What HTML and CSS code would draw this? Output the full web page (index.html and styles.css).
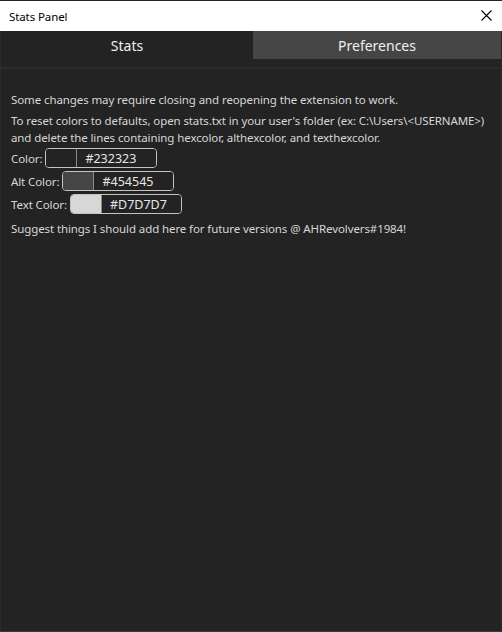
FILE: index.html
```html
<!DOCTYPE html>
<html>
<head>
<meta charset="utf-8">
<link rel="stylesheet" href="styles.css">
</head>
<body>
<div class="window">
  <div class="titlebar">
    <span class="title">Stats Panel</span>
    <svg class="close" width="12" height="12" viewBox="0 0 12 12"><path d="M0.5 0.5 L10.5 10.5 M10.5 0.5 L0.5 10.5" stroke="#000" stroke-width="1.1" fill="none"/></svg>
  </div>
  <div class="tabs">
    <div class="tab active">Stats</div>
    <div class="tab">Preferences</div>
  </div>
  <div class="divider"></div>
  <div class="content">
    <p class="line">Some changes may require closing and reopening the extension to work.</p>
    <p class="line block"><span class="nowrap">To reset colors to defaults, open stats.txt in your user's folder (ex: C:\Users\&lt;USERNAME&gt;)</span><br>and delete the lines containing hexcolor, althexcolor, and texthexcolor.</p>
    <div class="row first">
      <span class="label">Color:</span>
      <div class="picker"><span class="swatch" style="background:#232323"></span><span class="hex">#232323</span></div>
    </div>
    <div class="row">
      <span class="label">Alt Color:</span>
      <div class="picker"><span class="swatch" style="background:#454545"></span><span class="hex">#454545</span></div>
    </div>
    <div class="row">
      <span class="label">Text Color:</span>
      <div class="picker"><span class="swatch" style="background:#D7D7D7"></span><span class="hex">#D7D7D7</span></div>
    </div>
    <p class="line last">Suggest things I should add here for future versions @ AHRevolvers#1984!</p>
  </div>
</div>
</body>
</html>
```
FILE: styles.css
```css
html, body {
  margin: 0;
  padding: 0;
  background: #232323;
}
.window {
  width: 502px;
  height: 632px;
  box-sizing: border-box;
  background: #232323;
  border-top: 1px solid #2a2520;
  border-left: 1px solid #2b2b2b;
  border-right: 1px solid #2b2b2b;
  border-bottom: 1px solid #3a3a3a;
  display: flex;
  flex-direction: column;
  font-family: "Noto Sans", "Open Sans", sans-serif;
}
.titlebar {
  height: 30px;
  background: #ffffff;
  display: flex;
  align-items: center;
  justify-content: space-between;
  padding: 0 9px 0 9px;
  margin-left: -1px;
  margin-right: -1px;
}
.title {
  font-size: 11.5px;
  letter-spacing: -0.1px;
  color: #000;
}
.close {
  display: block;
}
.tabs {
  display: grid;
  grid-template-columns: 252px 1fr;
  height: 28px;
}
.tab {
  display: flex;
  align-items: center;
  justify-content: center;
  font-size: 14px;
  color: #f0f0f0;
  background: #454545;
}
.tab.active {
  background: #232323;
}
.divider {
  margin-top: 8px;
  height: 2px;
  background: #2c2c2c;
}
.content {
  padding: 22px 10px 0 10px;
  color: #d7d7d7;
  font-size: 11.5px;
  letter-spacing: -0.1px;
  display: flex;
  flex-direction: column;
}
.line {
  margin: 0;
  line-height: 17px;
}
.block {
  margin-top: 4px;
}
.nowrap {
  white-space: nowrap;
}
.row {
  display: flex;
  align-items: center;
  height: 20px;
  margin-top: 3px;
}
.row.first {
  margin-top: 2px;
}
.last {
  margin-top: 6px;
}
.label {
  margin-right: 3px;
}
.picker {
  display: flex;
  width: 112px;
  height: 20px;
  box-sizing: border-box;
  border: 1px solid #c4c4c4;
  border-radius: 4px;
  overflow: hidden;
}
.swatch {
  width: 30px;
  border-right: 1px solid #8a8a8a;
}
.hex {
  flex: 1;
  display: flex;
  align-items: center;
  padding-left: 8px;
  background: #232323;
  font-size: 12.5px;
  letter-spacing: 0;
  color: #e6e6e6;
}
```
